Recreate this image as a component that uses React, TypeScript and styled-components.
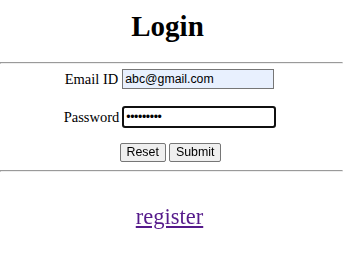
import React from "react";
import styled, { createGlobalStyle } from "styled-components";

const Global = createGlobalStyle`
  html, body { margin: 0; padding: 0; background: #ffffff; }
  body {
    font-family: "Liberation Serif", "Times New Roman", serif;
    font-size: 16px;
    color: #000000;
  }
`;

const Page = styled.div`
  text-align: center;
`;

const Title = styled.h1`
  margin: 9px 0 19px;
  padding-right: 8px;
  font-size: 29px;
  line-height: 34px;
  font-weight: bold;
`;

const Rule = styled.hr`
  margin: 0;
  height: 0;
  border-style: inset;
  border-width: 1px;
  color: gray;
`;

const Form = styled.form`
  display: flex;
  flex-direction: column;
  align-items: center;
  padding: 0 4px 8px 0;
`;

const Row = styled.div<{ $top: number }>`
  display: flex;
  align-items: center;
  justify-content: center;
  gap: 4px;
  height: 20px;
  margin-top: ${(p) => p.$top}px;
`;

const Label = styled.label`
  font-size: 14.5px;
  line-height: 20px;
`;

const Field = styled.input<{ $filled?: boolean }>`
  box-sizing: border-box;
  width: 152px;
  height: 20px;
  padding: 1px 2px;
  border: 1px solid #767676;
  border-radius: 0;
  background: ${(p) => (p.$filled ? "#e8f0fe" : "#ffffff")};
  font-family: "Liberation Sans", Arial, sans-serif;
  font-size: 12.3px;
  color: #000;
  &[type="password"] {
    letter-spacing: -0.4px;
  }
  &:focus {
    outline: 2px solid #101010;
    outline-offset: -1px;
    border-radius: 2px;
  }
`;

const Buttons = styled.div`
  display: flex;
  gap: 3px;
  margin: 16px 0 0 2px;
`;

const Button = styled.button`
  box-sizing: border-box;
  height: 19px;
  padding: 1px 6px;
  border: 1px solid #767676;
  border-radius: 2px;
  background: #efefef;
  font-family: "Liberation Sans", Arial, sans-serif;
  font-size: 12.4px;
  line-height: 15px;
  color: #000;
`;

const Footer = styled.div`
  margin-top: 31px;
  padding-right: 4px;
  font-size: 22.5px;
  line-height: 28px;
`;

const Link = styled.a`
  color: #551a8b;
  text-decoration: underline;
`;

export default function App() {
  return (
    <Page>
      <Global />
      <Title>Login</Title>
      <Rule />
      <Form onSubmit={(e) => e.preventDefault()}>
        <Row $top={5}>
          <Label htmlFor="email">Email ID</Label>
          <Field id="email" type="text" $filled defaultValue="abc@gmail.com" />
        </Row>
        <Row $top={18}>
          <Label htmlFor="pw">Password</Label>
          <Field id="pw" type="password" defaultValue="abcdefghi" autoFocus />
        </Row>
        <Buttons>
          <Button type="reset">Reset</Button>
          <Button type="submit">Submit</Button>
        </Buttons>
      </Form>
      <Rule />
      <Footer>
        <Link href="#register">register</Link>
      </Footer>
    </Page>
  );
}
